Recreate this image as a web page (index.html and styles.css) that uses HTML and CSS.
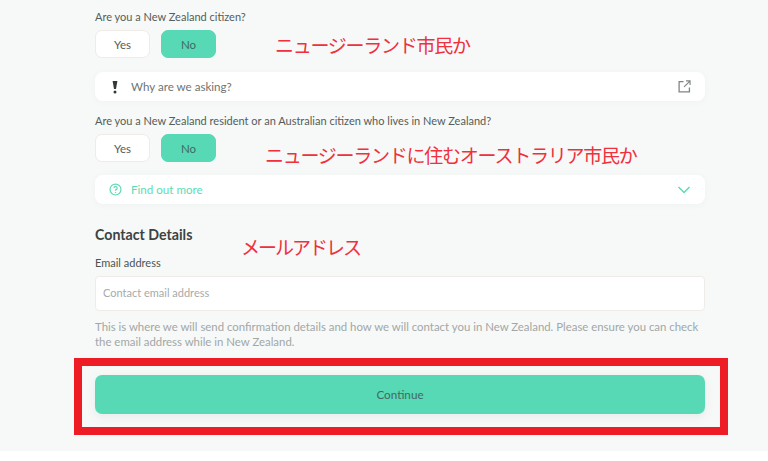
FILE: index.html
```html
<!DOCTYPE html>
<html lang="en">
<head>
<meta charset="utf-8">
<title>Contact details</title>
<link rel="stylesheet" href="styles.css">
</head>
<body>
<main class="page">
  <form class="form">
    <p class="question q-first">Are you a New Zealand citizen?</p>
    <div class="choices">
      <span class="choice">Yes</span>
      <span class="choice selected">No</span>
    </div>
    <div class="info">
      <svg class="icon-bang" viewBox="0 0 10 14" width="10" height="14"><path d="M2.6 1h4.8L6 9H4z" fill="#2f3a38"/><circle cx="5" cy="12" r="1.5" fill="#2f3a38"/></svg>
      <span class="info-text">Why are we asking?</span>
      <svg class="info-end" viewBox="0 0 14 14" width="13" height="13" fill="none" stroke="#7f8583" stroke-width="1.4"><path d="M6 1.7H1.2v11.1h11.1V8"/><path d="M6.5 7.5 12.6 1.4M8.6 1h4.4v4.4" stroke-width="1.2"/></svg>
    </div>
    <p class="question q-second">Are you a New Zealand resident or an Australian citizen who lives in New Zealand?</p>
    <div class="choices">
      <span class="choice">Yes</span>
      <span class="choice selected">No</span>
    </div>
    <div class="info info-second">
      <svg class="icon-help" viewBox="0 0 14 14" width="13" height="13" fill="none" stroke="#5ddbb7" stroke-width="1.3"><circle cx="7" cy="7" r="5.9"/><path d="M5.2 5.5A1.8 1.8 0 1 1 7 7.4v1"/><path d="M7 9.6v1.2"/></svg>
      <span class="info-text accent">Find out more</span>
      <svg class="info-end" viewBox="0 0 14 10" width="14" height="10" fill="none" stroke="#5ddbb7" stroke-width="1.5"><path d="M1.5 2 7 7.5 12.5 2"/></svg>
    </div>
    <h2 class="heading">Contact Details</h2>
    <label class="field-label" for="email">Email address</label>
    <input class="field" id="email" type="text" placeholder="Contact email address">
    <p class="hint">This is where we will send confirmation details and how we will contact you in New Zealand. Please ensure you can check the email address while in New Zealand.</p>
    <button class="continue" type="button">Continue</button>
  </form>
  <span class="note note-1">ニュージーランド市民か</span>
  <span class="note note-2">ニュージーランドに住むオーストラリア市民か</span>
  <span class="note note-3">メールアドレス</span>
  <div class="highlight"></div>
</main>
</body>
</html>
```

FILE: styles.css
```css
* { box-sizing: border-box; }
html, body { margin: 0; background: #fff; }
body { font-family: Lato, "Noto Sans", sans-serif; color: #3c4543; }
.page { position: relative; width: 768px; height: 451px; background: #f6f9f8; overflow: hidden; }
.form { width: 610px; margin-left: 95px; padding-top: 10px; display: flex; flex-direction: column; }
.question { margin: 0; font-size: 11px; line-height: 14px; color: #555c5a; }
.q-second { margin-top: 13px; }
.choices { display: flex; gap: 11px; margin-top: 6px; }
.choice { width: 55px; height: 28px; display: flex; align-items: center; justify-content: center; background: #fff; border: 1px solid #efebe7; border-radius: 7px; font-size: 11.5px; color: #555c5a; }
.choice.selected { background: #58d9b5; border-color: #58d9b5; color: #3f6a60; }
.info { height: 29px; margin-top: 14px; padding: 0 14px; display: flex; align-items: center; background: #fff; border-radius: 8px; box-shadow: 0 1px 6px rgba(120,140,135,.06); }
.info-second { margin-top: 13px; }
.icon-bang { margin-left: 1px; margin-right: 11px; }
.icon-help { margin-right: 9px; }
.info-text { font-size: 11.6px; color: #6e7573; }
.info-text.accent { color: #5ddbb7; }
.info-end { margin-left: auto; }
.heading { margin: 23px 0 0; font-size: 14.2px; line-height: 16px; font-weight: 700; color: #3c4341; }
.field-label { margin-top: 13px; font-size: 11px; line-height: 14px; color: #4d5452; }
.field { height: 35px; width: 100%; margin-top: 6px; padding: 0 7px 2px; background: #fff; border: 1px solid #efebe7; border-radius: 4px; font: 11px Lato, "Noto Sans", sans-serif; outline: 0; }
.field::placeholder { color: #a6abaa; opacity: 1; }
.hint { margin: 8px 0 0; font-size: 11.4px; line-height: 15px; color: #a2a7a6; }
.continue { height: 39px; width: 100%; margin-top: 26px; padding: 0 0 2px; background: #58d9b5; border: 0; border-radius: 7px; font: 11.7px Lato, "Noto Sans", sans-serif; color: #3f6a60; box-shadow: 0 3px 10px rgba(120,140,135,.12); }
.note { position: absolute; color: #f0303c; font-family: "Noto Sans CJK JP", sans-serif; font-size: 19px; line-height: 24px; letter-spacing: -1.25px; white-space: nowrap; }
.note-1 { left: 275px; top: 33px; }
.note-2 { left: 265px; top: 143px; }
.note-3 { left: 241px; top: 235px; letter-spacing: -2px; }
.highlight { position: absolute; left: 74px; top: 358px; width: 654px; height: 77px; border: 8px solid #ee1c25; }
```
